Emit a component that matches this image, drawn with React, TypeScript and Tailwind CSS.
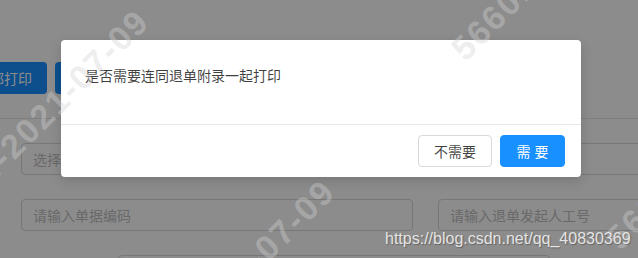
import React from 'react';

const watermark =
  "pointer-events-none absolute origin-left -rotate-45 whitespace-nowrap font-['Liberation_Sans',Arial,sans-serif] text-[34px] font-bold leading-[34px] tracking-[2px] text-[rgba(210,210,210,0.4)] select-none";

function Field({ placeholder, className }: { placeholder: string; className: string }) {
  return (
    <input
      readOnly
      placeholder={placeholder}
      className={`h-8 rounded border border-[#d9d9d9] bg-white px-[11px] text-sm outline-none placeholder:text-[#bfbfbf] ${className}`}
    />
  );
}

export default function App() {
  return (
    <div className="relative h-[258px] w-[638px] overflow-hidden bg-white font-['Microsoft_YaHei','Noto_Sans_CJK_SC',sans-serif]">
      {/* page behind the dialog */}
      <div className="pt-[62px]">
        <div className="-ml-[39px] flex gap-2">
          <button className="h-8 rounded bg-[#1890ff] px-[15px] text-sm text-white">全部打印</button>
          <button className="h-8 rounded bg-[#1890ff] px-[15px] text-sm text-white">批量打印</button>
        </div>
        <div className="mt-6 h-px bg-[#e8e8e8]" />
        <div className="flex flex-col gap-6 pt-6 pl-[21px]">
          <div className="flex gap-[25px]">
            <Field placeholder="选择退单日期" className="w-[392px] shrink-0" />
            <Field placeholder="选择门店" className="w-[392px] shrink-0" />
          </div>
          <div className="flex gap-[25px]">
            <Field placeholder="请输入单据编码" className="w-[392px] shrink-0" />
            <Field placeholder="请输入退单发起人工号" className="w-[392px] shrink-0" />
          </div>
          <div className="flex pl-[97px]">
            <Field placeholder="" className="w-[432px] shrink-0" />
          </div>
        </div>
      </div>

      {/* mask */}
      <div className="absolute inset-0 bg-black/45" />

      {/* confirm dialog */}
      <div className="absolute left-[61px] top-[40px] w-[520px] rounded-sm bg-white shadow-[0_4px_12px_rgba(0,0,0,0.15)]">
        <div className="h-[84px] px-6 pt-6 text-sm leading-[22px] text-[rgba(0,0,0,0.75)]">
          是否需要连同退单附录一起打印
        </div>
        <div className="flex justify-end gap-2 border-t border-[#e8e8e8] px-4 py-2.5">
          <button className="h-8 rounded border border-[#d9d9d9] bg-white px-[15px] text-sm text-[rgba(0,0,0,0.75)]">
            不需要
          </button>
          <button className="h-8 w-[65px] rounded border border-[#1890ff] bg-[#1890ff] text-sm text-white">
            <span className="-mr-[0.3em] tracking-[0.3em]">需要</span>
          </button>
        </div>
      </div>

      {/* user watermark */}
      <span className={`${watermark} left-[-122px] top-[263px]`}>56601234-2021-07-09</span>
      <span className={`${watermark} left-[457px] top-[37px]`}>56601234-2021-07-09</span>
      <span className={`${watermark} left-[64px] top-[433px]`}>56601234-2021-07-09</span>
      <span className={`${watermark} left-[612px] top-[226px]`}>56601234-2021-07-09</span>

      <span className="pointer-events-none absolute left-[385px] top-[231px] font-['Liberation_Sans',Arial,sans-serif] text-[16px] leading-4 text-[#e4e4e4] [text-shadow:1px_1px_1px_rgba(0,0,0,0.3)]">
        https://blog.csdn.net/qq_40830369
      </span>
    </div>
  );
}
